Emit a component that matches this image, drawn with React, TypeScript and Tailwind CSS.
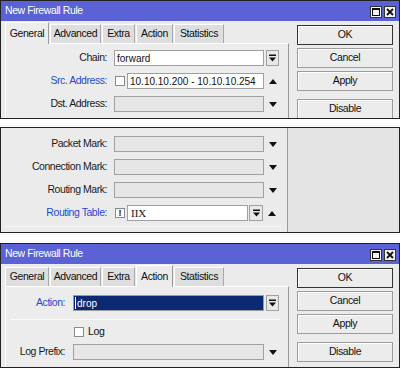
import React from "react";

const F = "font-[family-name:'Liberation_Sans',Arial,sans-serif]";

function TitleBar() {
  return (
    <div className="flex h-[20px] items-center justify-between bg-[#5a62d5] pl-[4px] pr-[3px]">
      <span className="text-[10.5px] tracking-[-0.4px] text-white">New Firewall Rule</span>
      <div className="flex gap-[2px] pt-[1px]">
        <div className="flex h-[12px] w-[12px] items-center justify-center border border-[#333] bg-[#f2f2f2]">
          <svg width="8" height="8" viewBox="0 0 8 8">
            <rect x="0.5" y="0.5" width="7" height="7" fill="none" stroke="#111" strokeWidth="1" />
            <rect x="0" y="0" width="8" height="2" fill="#111" />
          </svg>
        </div>
        <div className="flex h-[12px] w-[12px] items-center justify-center border border-[#333] bg-[#f2f2f2]">
          <svg width="8" height="8" viewBox="0 0 8 8">
            <path d="M1 1L7 7M7 1L1 7" stroke="#111" strokeWidth="1.8" />
          </svg>
        </div>
      </div>
    </div>
  );
}

const tabs = [
  { name: "General", w: "w-[44px]" },
  { name: "Advanced", w: "w-[51px]" },
  { name: "Extra", w: "w-[33px]" },
  { name: "Action", w: "w-[37px]" },
  { name: "Statistics", w: "w-[50px]" },
];

function Tabs({ active }: { active: string }) {
  return (
    <div className="flex h-[21px] items-end gap-[1px]">
      {tabs.map((t) =>
        t.name === active ? (
          <div
            key={t.name}
            className={`${t.w} relative z-10 -mb-[1px] flex h-[22px] items-start justify-center border-l border-t border-r border-l-white border-t-white border-r-[#9a9a9a] bg-[#ececec] pt-[3px] text-[10.5px] tracking-[-0.4px] text-[#111]`}
          >
            {t.name}
          </div>
        ) : (
          <div
            key={t.name}
            className={`${t.w} flex h-[19px] items-center justify-center border-l border-t border-r border-l-white border-t-white border-r-[#a8a8a8] bg-[#dedede] text-[10.5px] tracking-[-0.4px] text-[#111]`}
          >
            {t.name}
          </div>
        )
      )}
    </div>
  );
}

function DropBtn() {
  return (
    <div className="ml-[2px] flex h-[16px] w-[13px] items-center justify-center border border-[#a0a0a0] bg-[#e8e8e8]">
      <svg width="7" height="8" viewBox="0 0 7 8">
        <rect x="0" y="0.5" width="7" height="1.5" fill="#111" />
        <path d="M0 3.5H7L3.5 7.5Z" fill="#111" />
      </svg>
    </div>
  );
}

function Arrow({ up }: { up?: boolean }) {
  return (
    <div className="ml-[1px] flex h-[16px] w-[16px] items-center justify-center">
      <svg width="8" height="5" viewBox="0 0 8 5">
        {up ? <path d="M0 5H8L4 0Z" fill="#111" /> : <path d="M0 0H8L4 5Z" fill="#111" />}
      </svg>
    </div>
  );
}

function Label({ text, blue, w }: { text: string; blue?: boolean; w: string }) {
  return (
    <div
      className={`${w} shrink-0 whitespace-nowrap text-right text-[10.5px] tracking-[-0.45px] ${blue ? "text-[#2747d8]" : "text-[#1a1a1a]"}`}
    >
      {text}
    </div>
  );
}

function Buttons() {
  const base =
    "flex h-[20px] w-[96px] items-center justify-center bg-[#ececec] text-[10.5px] tracking-[-0.4px] text-[#111] shadow-[inset_1px_1px_0_#ffffff]";
  return (
    <div className="ml-[8px] mt-[4px] flex flex-col">
      <div className={`${base} border border-[#333]`}>OK</div>
      <div className={`${base} mt-[3px] border border-[#9c9c9c]`}>Cancel</div>
      <div className={`${base} mt-[3px] border border-[#9c9c9c]`}>Apply</div>
      <div className={`${base} mt-[8px] border border-[#9c9c9c]`}>Disable</div>
    </div>
  );
}

function CheckBox() {
  return <div className="h-[10px] w-[10px] shrink-0 border border-[#8a8a8a] bg-white" />;
}

function Panel1() {
  return (
    <div className="h-[119px] overflow-hidden border border-[#222] bg-[#ebebeb]">
      <TitleBar />
      <div className="flex">
        <div className="ml-[4px] w-[284px] pt-[1px]">
          <Tabs active="General" />
          <div className="h-[100px] border-l border-t border-r border-l-white border-t-white border-r-[#9a9a9a] bg-[#ececec] pt-[6px]">
            <div className="flex flex-col gap-[7px]">
              <div className="flex h-[16px] items-center">
                <Label text="Chain:" w="w-[101px]" />
                <div className="ml-[7px] flex h-[16px] w-[150px] items-center border border-[#a0a0a0] bg-white pl-[2px] text-[10px] text-[#111]">
                  forward
                </div>
                <DropBtn />
              </div>
              <div className="flex h-[16px] items-center">
                <Label text="Src. Address:" blue w="w-[101px]" />
                <div className="ml-[8px]">
                  <CheckBox />
                </div>
                <div className="ml-[2px] flex h-[16px] w-[137px] items-center overflow-hidden whitespace-nowrap border border-[#a0a0a0] bg-white pl-[2px] text-[10px] text-[#111]">
                  10.10.10.200 - 10.10.10.254
                </div>
                <Arrow up />
              </div>
              <div className="flex h-[16px] items-center">
                <Label text="Dst. Address:" w="w-[101px]" />
                <div className="ml-[7px] h-[16px] w-[150px] border border-[#a0a0a0] bg-[#e6e6e6]" />
                <Arrow />
              </div>
            </div>
          </div>
        </div>
        <Buttons />
      </div>
    </div>
  );
}

function MarkRow({ text }: { text: string }) {
  return (
    <div className="flex h-[16px] items-center">
      <Label text={text} w="w-[106px]" />
      <div className="ml-[7px] h-[16px] w-[150px] border border-[#a0a0a0] bg-[#e6e6e6]" />
      <Arrow />
    </div>
  );
}

function Panel2() {
  return (
    <div className="mt-[8px] flex h-[106px] overflow-hidden border border-[#222] bg-[#ebebeb]">
      <div className="w-[287px] border-r border-[#9c9c9c] pt-[8px]">
        <div className="flex flex-col gap-[7px]">
          <MarkRow text="Packet Mark:" />
          <MarkRow text="Connection Mark:" />
          <MarkRow text="Routing Mark:" />
          <div className="flex h-[16px] items-center">
            <Label text="Routing Table:" blue w="w-[106px]" />
            <div className="ml-[8px] flex h-[10px] w-[10px] shrink-0 items-center justify-center border border-[#8a8a8a] bg-white text-[9px] font-bold leading-none text-[#111]">
              !
            </div>
            <div className="ml-[2px] flex h-[16px] w-[121px] items-center border border-[#a0a0a0] bg-white pl-[3px] font-[family-name:'Liberation_Serif',serif] text-[11px] text-[#111]">
              IIX
            </div>
            <div className="ml-[1px] flex h-[16px] w-[14px] items-center justify-center border border-[#a0a0a0] bg-[#e8e8e8]">
              <svg width="7" height="8" viewBox="0 0 7 8">
                <rect x="0" y="0.5" width="7" height="1.5" fill="#111" />
                <path d="M0 3.5H7L3.5 7.5Z" fill="#111" />
              </svg>
            </div>
            <Arrow up />
          </div>
        </div>
        <div className="ml-[4px] mt-[5px] h-[1px] w-[276px] bg-[#f8f8f8]" />
      </div>
      <div className="flex-1 bg-[#e4e4e4]" />
    </div>
  );
}

function Panel3() {
  return (
    <div className="mt-[10px] h-[125px] overflow-hidden border border-[#222] bg-[#ebebeb]">
      <TitleBar />
      <div className="flex">
        <div className="ml-[4px] w-[284px] pt-[1px]">
          <Tabs active="Action" />
          <div className="h-[100px] border-l border-t border-r border-l-white border-t-white border-r-[#9a9a9a] bg-[#ececec] pt-[8px]">
            <div className="flex h-[16px] items-center">
              <Label text="Action:" blue w="w-[59px]" />
              <div className="ml-[8px] flex h-[16px] w-[191px] items-center border border-[#9a9a9a] bg-[#0c2a74] text-[10px] text-white">
                <span className="ml-[1px] mr-[1px] h-[12px] w-[1px] bg-white" />
                drop
              </div>
              <DropBtn />
            </div>
            <div className="ml-[4px] mt-[8px] h-[1px] w-[270px] bg-[#fafafa]" />
            <div className="mt-[6px] flex h-[11px] items-center">
              <div className="ml-[68px]">
                <CheckBox />
              </div>
              <span className="ml-[4px] text-[10.5px] tracking-[-0.4px] text-[#111]">Log</span>
            </div>
            <div className="mt-[7px] flex h-[16px] items-center">
              <Label text="Log Prefix:" w="w-[59px]" />
              <div className="ml-[8px] h-[16px] w-[191px] border border-[#a0a0a0] bg-[#e6e6e6]" />
              <Arrow />
            </div>
          </div>
        </div>
        <Buttons />
      </div>
    </div>
  );
}

export default function App() {
  return (
    <div className={`${F} h-[369px] w-[400px] overflow-hidden bg-white`}>
      <Panel1 />
      <Panel2 />
      <Panel3 />
    </div>
  );
}
